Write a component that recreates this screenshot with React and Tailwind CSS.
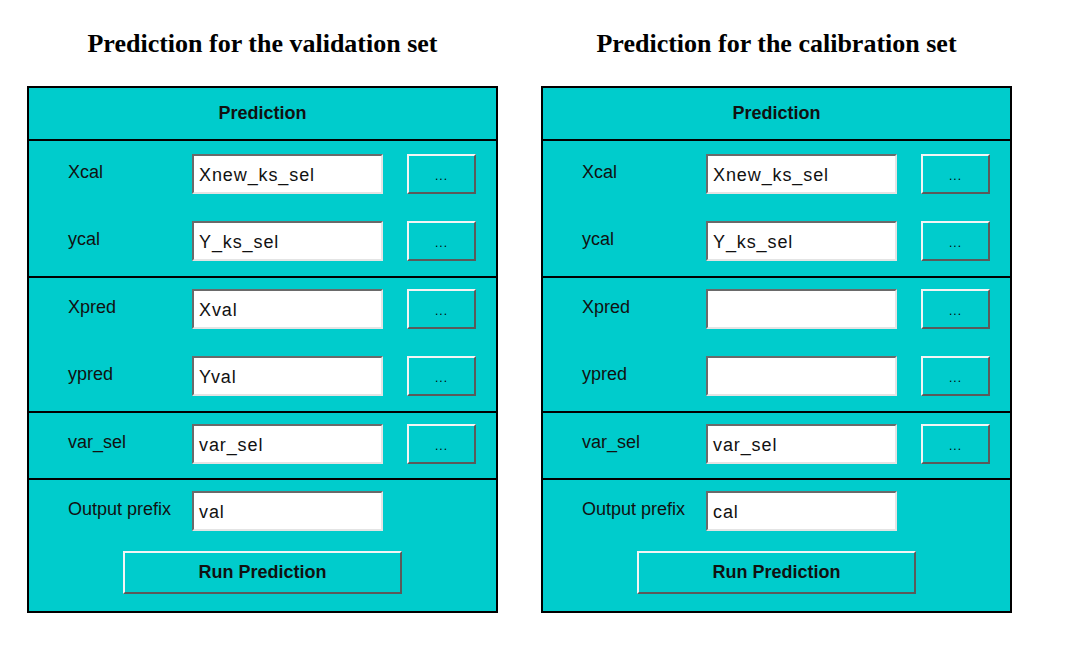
const PANELS = [
  {
    title: 'Prediction for the validation set',
    xcal: 'Xnew_ks_sel',
    ycal: 'Y_ks_sel',
    xpred: 'Xval',
    ypred: 'Yval',
    varSel: 'var_sel',
    prefix: 'val',
  },
  {
    title: 'Prediction for the calibration set',
    xcal: 'Xnew_ks_sel',
    ycal: 'Y_ks_sel',
    xpred: '',
    ypred: '',
    varSel: 'var_sel',
    prefix: 'cal',
  },
]

const sans = { fontFamily: '"Liberation Sans", Arial, sans-serif' }

function Field({ value }) {
  return (
    <div className="flex h-[40px] w-[191px] items-center border-2 border-t-[#6a6a6a] border-l-[#6a6a6a] border-b-[#e4e4e4] border-r-[#e4e4e4] bg-white pl-[5px] pt-[3px] text-[18px] tracking-[0.9px] text-[#111]">
      {value}
    </div>
  )
}

function Browse() {
  return (
    <button className="ml-[24px] flex h-[40px] w-[69px] items-center justify-center border-2 border-t-[#f4f4f4] border-l-[#f4f4f4] border-b-[#5a5a5a] border-r-[#5a5a5a] bg-[#00cccc] pt-[3px] text-[12px] tracking-[1px] text-black">
      ...
    </button>
  )
}

function Row({ label, value, browse = true }) {
  return (
    <div className="flex items-center pl-[39px]">
      <span className="w-[124px] pb-[3px] text-[18px] text-[#111]">{label}</span>
      <Field value={value} />
      {browse && <Browse />}
    </div>
  )
}

function Panel({ p }) {
  return (
    <div className="flex w-[471px] flex-col">
      <div className="flex h-[86px] items-center justify-center">
        <h2
          className="text-[26px] font-bold text-black"
          style={{ fontFamily: '"Liberation Serif", "Times New Roman", serif' }}
        >
          {p.title}
        </h2>
      </div>
      <div className="border-2 border-black bg-[#00cccc]" style={sans}>
        {/* header */}
        <div className="flex h-[53px] items-center justify-center border-b-2 border-black text-[18px] font-bold text-[#111]">
          Prediction
        </div>
        {/* calibration */}
        <div className="flex flex-col gap-[27px] border-b-2 border-black pt-[13px] pb-[15px]">
          <Row label="Xcal" value={p.xcal} />
          <Row label="ycal" value={p.ycal} />
        </div>
        {/* prediction data */}
        <div className="flex flex-col gap-[27px] border-b-2 border-black pt-[11px] pb-[15px]">
          <Row label="Xpred" value={p.xpred} />
          <Row label="ypred" value={p.ypred} />
        </div>
        {/* variables */}
        <div className="flex flex-col border-b-2 border-black pt-[11px] pb-[14px]">
          <Row label="var_sel" value={p.varSel} />
        </div>
        {/* output */}
        <div className="flex flex-col pt-[11px] pb-[17px]">
          <Row label="Output prefix" value={p.prefix} browse={false} />
          <div className="mt-[20px] flex justify-center">
            <button className="h-[43px] w-[279px] border-2 border-t-[#f4f4f4] border-l-[#f4f4f4] border-b-[#5a5a5a] border-r-[#5a5a5a] bg-[#00cccc] text-[18px] font-bold text-[#111]">
              Run Prediction
            </button>
          </div>
        </div>
      </div>
    </div>
  )
}

export default function App() {
  return (
    <div className="flex h-[658px] w-[1083px] gap-[43px] bg-white pl-[27px]">
      {PANELS.map(p => (
        <Panel key={p.title} p={p} />
      ))}
    </div>
  )
}
